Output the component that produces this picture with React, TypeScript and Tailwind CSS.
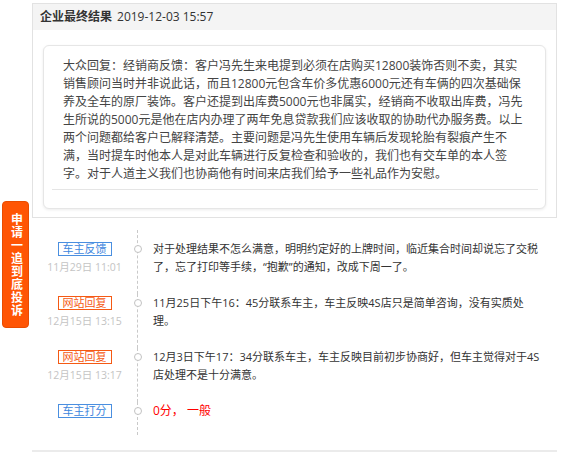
type TimelineItem = {
  tag: string;
  tone: "blue" | "orange";
  time?: string;
  lines: string[];
  red?: boolean;
};

const paragraph = [
  "大众回复：经销商反馈：客户冯先生来电提到必须在店购买12800装饰否则不卖，其实",
  "销售顾问当时并非说此话，而且12800元包含车价多优惠6000元还有车俩的四次基础保",
  "养及全车的原厂装饰。客户还提到出库费5000元也非属实，经销商不收取出库费，冯先",
  "生所说的5000元是他在店内办理了两年免息贷款我们应该收取的协助代办服务费。以上",
  "两个问题都给客户已解释清楚。主要问题是冯先生使用车辆后发现轮胎有裂痕产生不",
  "满，当时提车时他本人是对此车辆进行反复检查和验收的，我们也有交车单的本人签",
  "字。对于人道主义我们也协商他有时间来店我们给予一些礼品作为安慰。",
];

const timeline: TimelineItem[] = [
  {
    tag: "车主反馈",
    tone: "blue",
    time: "11月29日 11:01",
    lines: [
      "对于处理结果不怎么满意，明明约定好的上牌时间，临近集合时间却说忘了交税",
      "了，忘了打印等手续，“抱歉”的通知，改成下周一了。",
    ],
  },
  {
    tag: "网站回复",
    tone: "orange",
    time: "12月15日 13:15",
    lines: [
      "11月25日下午16：45分联系车主，车主反映4S店只是简单咨询，没有实质处",
      "理。",
    ],
  },
  {
    tag: "网站回复",
    tone: "orange",
    time: "12月15日 13:17",
    lines: [
      "12月3日下午17：34分联系车主，车主反映目前初步协商好，但车主觉得对于4S",
      "店处理不是十分满意。",
    ],
  },
  { tag: "车主打分", tone: "blue", lines: ["0分， 一般"], red: true },
];

const toneClasses = {
  blue: "border-[#4a8fe0] text-[#3d86dd]",
  orange: "border-[#f55a14] text-[#f55a14]",
};

export default function App() {
  return (
    <div className="relative w-[562px] h-[455px] overflow-hidden bg-white text-[#333] font-['Open_Sans','Noto_Sans_CJK_SC',sans-serif]">
      {/* floating complaint button */}
      <a
        href="#"
        className="absolute left-[2px] top-[201px] flex h-[127px] w-[27px] items-center justify-center rounded-[4px] border border-[#e94c00] bg-[#ff5504] text-[12px] font-bold leading-[12px] text-white"
      >
        <span className="[writing-mode:vertical-rl] tracking-[1px]">申请一追到底投诉</span>
      </a>

      <div className="ml-[32px] w-[525px] pt-[3px]">
        <section className="border border-[#e2e2e2]">
          <div className="flex h-[26px] items-center gap-[5px] bg-[#f4f4f4] pl-[7px] text-[12px] text-[#333]">
            <b className="font-bold">企业最终结果</b>
            <span>2019-12-03 15:57</span>
          </div>
          <div className="mx-[10px] mt-[15px] mb-[8px] rounded-[6px] border border-[#e6e6e6] bg-white shadow-[0_1px_3px_rgba(0,0,0,0.08)]">
            <p className="whitespace-nowrap px-[19px] pt-[11px] text-[12px] leading-[18px] text-[#444]">
              {paragraph.map((line, i) => (
                <span key={i} className="block">
                  {line}
                </span>
              ))}
            </p>
            <div className="mx-[8px] mr-[7px] mt-[6px] mb-[18px] border-t border-[#e5e5e5]" />
          </div>
        </section>

        <div className="mt-[12px] flex flex-col">
          {timeline.map((item, i) => {
            const first = i === 0;
            const last = i === timeline.length - 1;
            return (
              <div key={i} className="flex">
                <div
                  className={`flex w-[105px] shrink-0 flex-col items-center ${first ? "pt-[10px]" : ""}`}
                >
                  <span
                    className={`mt-[2px] flex h-[14px] items-center border px-[4px] text-[11px] leading-[12px] ${toneClasses[item.tone]}`}
                  >
                    {item.tag}
                  </span>
                  {item.time && (
                    <span className="mt-[3px] text-[10.5px] leading-[16px] text-[#c4c4c4]">
                      {item.time}
                    </span>
                  )}
                </div>
                <div
                  className={`relative flex-1 border-l border-dashed border-[#c9c9c9] pl-[15px] ${first ? "pt-[10px]" : ""} ${last ? "pb-[15px]" : "pb-[18px]"}`}
                >
                  <span
                    className={`absolute left-[-4.5px] h-[8px] w-[8px] rounded-full border border-[#c2c2c2] bg-white ${first ? "top-[15px]" : "top-[5px]"}`}
                  />
                  {item.lines.map((line, j) => (
                    <div
                      key={j}
                      className={
                        item.red
                          ? "whitespace-pre text-[12px] leading-[18px] text-[#ff0000]"
                          : "whitespace-nowrap text-[11px] leading-[18px] text-[#333]"
                      }
                    >
                      {line}
                    </div>
                  ))}
                </div>
              </div>
            );
          })}
        </div>

        <div className="mt-[15px] h-[10px] border-t-2 border-[#ebebeb]" />
      </div>
    </div>
  );
}
